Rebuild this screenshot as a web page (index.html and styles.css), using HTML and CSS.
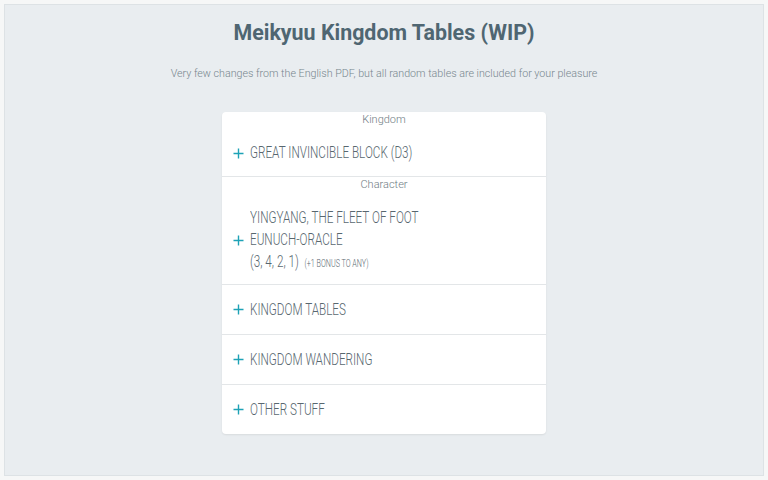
FILE: index.html
```html
<!DOCTYPE html>
<html>
<head>
<meta charset="utf-8">
<link rel="stylesheet" href="styles.css">
</head>
<body>
<div class="panel">
  <h1 class="title">Meikyuu Kingdom Tables (WIP)</h1>
  <p class="subtitle">Very few changes from the English PDF, but all random tables are included for your pleasure</p>
  <div class="card">
    <div class="row row-labeled">
      <div class="label">Kingdom</div>
      <div class="item item-one"><svg class="plus" viewBox="0 0 11 11"><path d="M5.5 0.5V10.5M0.5 5.5H10.5"/></svg><div class="text">GREAT INVINCIBLE BLOCK (D3)</div></div>
    </div>
    <div class="row row-labeled">
      <div class="label">Character</div>
      <div class="item item-multi"><svg class="plus" viewBox="0 0 11 11"><path d="M5.5 0.5V10.5M0.5 5.5H10.5"/></svg><div class="text">YINGYANG, THE FLEET OF FOOT<br>EUNUCH-ORACLE<br>(3, 4, 2, 1) <small class="bonus">(+1 BONUS TO ANY)</small></div></div>
    </div>
    <div class="row"><div class="item"><svg class="plus" viewBox="0 0 11 11"><path d="M5.5 0.5V10.5M0.5 5.5H10.5"/></svg><div class="text">KINGDOM TABLES</div></div></div>
    <div class="row"><div class="item"><svg class="plus" viewBox="0 0 11 11"><path d="M5.5 0.5V10.5M0.5 5.5H10.5"/></svg><div class="text">KINGDOM WANDERING</div></div></div>
    <div class="row"><div class="item"><svg class="plus" viewBox="0 0 11 11"><path d="M5.5 0.5V10.5M0.5 5.5H10.5"/></svg><div class="text">OTHER STUFF</div></div></div>
  </div>
</div>
</body>
</html>
```
FILE: styles.css
```css
html, body { margin: 0; padding: 0; }
body {
  background: #f6f7f7;
  padding: 4px;
  font-family: Roboto, "Liberation Sans", sans-serif;
}
.panel {
  box-sizing: border-box;
  height: 472px;
  background: #e9edf0;
  border: 1px solid #dde2e5;
  display: flex;
  flex-direction: column;
  align-items: center;
}
.title {
  margin: 14px 0 0;
  font-size: 21.4px;
  line-height: 28px;
  font-weight: 700;
  color: #4f6672;
}
.subtitle {
  margin: 20px 0 0;
  font-size: 10.7px;
  line-height: 14px;
  font-weight: 300;
  color: #77868e;
}
.card {
  margin-top: 31px;
  width: 324px;
  background: #fff;
  border-radius: 4px;
  box-shadow: 0 1px 2px rgba(0,0,0,0.08);
}
.row {
  border-top: 1px solid #e3e6e8;
  height: 49px;
  display: flex;
  flex-direction: column;
  justify-content: center;
}
.row:first-child { border-top: none; }
.row-labeled { height: auto; justify-content: flex-start; }
.label {
  text-align: center;
  font-size: 11px;
  line-height: 14px;
  font-weight: 300;
  color: #6f7c84;
  padding-top: 1px;
}
.item {
  display: flex;
  align-items: center;
  padding-left: 11px;
}
.item-one { padding-top: 17px; padding-bottom: 14px; height: 18px; }
.item-multi { padding-top: 15px; padding-bottom: 11px; }
.plus {
  width: 11px;
  height: 11px;
  margin-right: 6px;
  flex: none;
  fill: none;
  stroke: #1ea2b6;
  stroke-width: 1.4;
}
.text {
  font-family: Roboto, sans-serif;
  font-weight: 300;
  font-size: 16.6px;
  line-height: 22px;
  color: #58676f;
  transform: scaleX(0.705);
  transform-origin: left center;
  white-space: nowrap;
}
.bonus {
  font-size: 10.2px;
  line-height: 1;
  margin-left: 4px;
}
```
